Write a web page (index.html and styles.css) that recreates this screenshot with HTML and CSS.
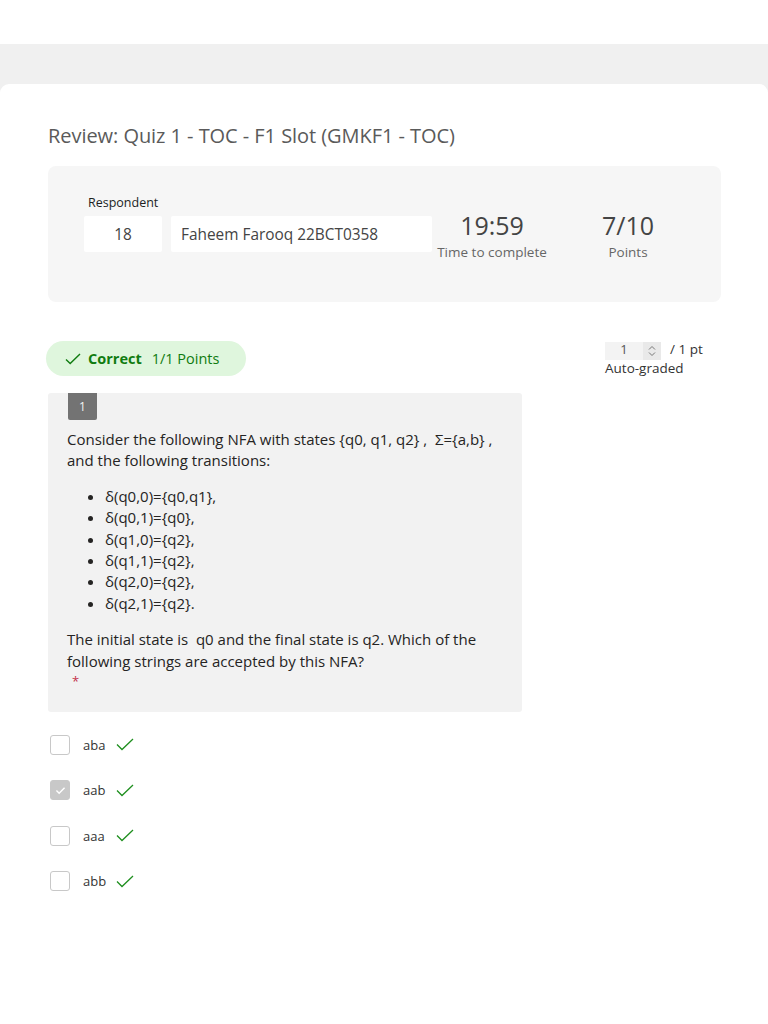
FILE: index.html
```html
<!DOCTYPE html>
<html lang="en">
<head>
<meta charset="utf-8">
<title>Review: Quiz 1 - TOC - F1 Slot (GMKF1 - TOC)</title>
<link rel="stylesheet" href="styles.css">
</head>
<body>
<div class="topbar"></div>
<div class="shell">
  <main class="card">
    <h1 class="title">Review: Quiz 1 - TOC - F1 Slot (GMKF1 - TOC)</h1>

    <section class="summary">
      <div class="respondent">
        <div class="resp-label">Respondent</div>
        <div class="resp-boxes">
          <div class="box box-num">18</div>
          <div class="box box-name">Faheem Farooq 22BCT0358</div>
        </div>
      </div>
      <div class="stat stat-time">
        <div class="stat-value">19:59</div>
        <div class="stat-label">Time to complete</div>
      </div>
      <div class="stat stat-points">
        <div class="stat-value">7/10</div>
        <div class="stat-label">Points</div>
      </div>
    </section>

    <section class="question">
      <div class="q-header">
        <div class="pill">
          <svg class="pill-check" viewBox="0 0 16 12" width="16" height="12"><path d="M1 6.5 L5.2 10.5 L15 1" fill="none" stroke="#107c10" stroke-width="1.4"/></svg>
          <span class="pill-strong">Correct</span>
          <span class="pill-pts">1/1 Points</span>
        </div>
        <div class="grade">
          <div class="grade-row">
            <div class="spin">
              <span class="spin-val">1</span>
              <span class="spin-btn">
                <svg viewBox="0 0 10 14" width="10" height="14"><path d="M2 5.5 L5 2.5 L8 5.5 M2 8.5 L5 11.5 L8 8.5" fill="none" stroke="#777" stroke-width="1"/></svg>
              </span>
            </div>
            <span class="grade-max">/ 1 pt</span>
          </div>
          <div class="grade-auto">Auto-graded</div>
        </div>
      </div>

      <div class="q-body">
        <div class="q-num">1</div>
        <p class="q-text">Consider the following NFA with states {q0, q1, q2} ,&nbsp; Σ={a,b} , and the following transitions:</p>
        <ul class="q-list">
          <li>δ(q0,0)={q0,q1},</li>
          <li>δ(q0,1)={q0},</li>
          <li>δ(q1,0)={q2},</li>
          <li>δ(q1,1)={q2},</li>
          <li>δ(q2,0)={q2},</li>
          <li>δ(q2,1)={q2}.</li>
        </ul>
        <p class="q-text">The initial state is &nbsp;q0 and the final state is q2. Which of the following strings are accepted by this NFA?</p>
        <div class="req">*</div>
      </div>

      <ul class="options">
        <li class="opt">
          <span class="cb"></span><span class="opt-label">aba</span>
          <svg class="ok" viewBox="0 0 18 13" width="18" height="13"><path d="M1 6.5 L6 11.5 L17 1" fill="none" stroke="#1f8f1f" stroke-width="1.3"/></svg>
        </li>
        <li class="opt">
          <span class="cb cb-on"><svg viewBox="0 0 12 10" width="11" height="9"><path d="M1.5 5 L4.5 8 L10.5 2" fill="none" stroke="#fff" stroke-width="1.6"/></svg></span><span class="opt-label">aab</span>
          <svg class="ok" viewBox="0 0 18 13" width="18" height="13"><path d="M1 6.5 L6 11.5 L17 1" fill="none" stroke="#1f8f1f" stroke-width="1.3"/></svg>
        </li>
        <li class="opt">
          <span class="cb"></span><span class="opt-label">aaa</span>
          <svg class="ok" viewBox="0 0 18 13" width="18" height="13"><path d="M1 6.5 L6 11.5 L17 1" fill="none" stroke="#1f8f1f" stroke-width="1.3"/></svg>
        </li>
        <li class="opt">
          <span class="cb"></span><span class="opt-label">abb</span>
          <svg class="ok" viewBox="0 0 18 13" width="18" height="13"><path d="M1 6.5 L6 11.5 L17 1" fill="none" stroke="#1f8f1f" stroke-width="1.3"/></svg>
        </li>
      </ul>
    </section>
  </main>
</div>
</body>
</html>
```

FILE: styles.css
```css
* { box-sizing: border-box; }
html, body { margin: 0; padding: 0; background: #fff; }
body {
  font-family: "Open Sans", "Noto Sans", sans-serif;
  color: #252423;
}
.topbar { height: 44px; background: #fff; }
.shell { background: #f0f0f0; padding-top: 40px; }
.card {
  background: #fff;
  border-radius: 9px 9px 0 0;
  padding: 39px 47px 100px 48px;
  min-height: 940px;
}
.title {
  margin: 0;
  font-size: 20px;
  font-weight: 400;
  line-height: 26px;
  color: #5a5a5a;
  letter-spacing: -0.05px;
}
.summary {
  margin-top: 17px;
  background: #f6f6f6;
  border-radius: 8px;
  height: 136px;
  padding: 28px 36px 0 36px;
  display: flex;
  align-items: flex-start;
}
.resp-label {
  font-size: 12.5px;
  line-height: 18px;
  padding-left: 4px;
  color: #201f1e;
}
.resp-boxes { display: flex; gap: 9px; margin-top: 4px; }
.box {
  background: #fff;
  height: 36px;
  border-radius: 2px;
  font-size: 15.4px;
  color: #444;
  display: flex;
  align-items: center;
}
.box-num { width: 78px; justify-content: center; }
.box-name { width: 261px; padding-left: 10px; }
.stat { text-align: center; margin-top: 16px; }
.stat-time { width: 118px; margin-left: 1px; }
.stat-points { width: 72px; margin-left: 41px; }
.stat-value {
  font-size: 25px;
  line-height: 30px;
  color: #444;
}
.stat-label {
  margin-top: 3px;
  font-size: 13.5px;
  line-height: 18px;
  color: #666;
}
.question { margin-top: 39px; }
.q-header { display: flex; justify-content: space-between; align-items: flex-start; }
.pill {
  margin-left: -2px;
  width: 200px;
  height: 35px;
  border-radius: 18px;
  background: #dff6dd;
  display: flex;
  align-items: center;
  padding-left: 19px;
  color: #107c10;
  font-size: 14.5px;
}
.pill-check { margin-right: 7px; }
.pill-strong { font-weight: 700; margin-right: 10px; }
.grade { width: 116px; }
.grade-row { display: flex; align-items: flex-start; gap: 9px; height: 18px; margin-top: 1px; }
.spin {
  width: 56px;
  height: 18px;
  background: #f3f3f3;
  display: flex;
  align-items: center;
}
.spin-val { flex: 1; text-align: center; font-size: 13px; color: #555; line-height: 15px; padding-bottom: 3px; }
.spin-btn {
  width: 18px;
  height: 18px;
  background: #e9e9e9;
  display: flex;
  align-items: center;
  justify-content: center;
}
.spin-btn svg { display: block; }
.grade-max { font-size: 13.5px; color: #333; line-height: 15px; }
.grade-auto { font-size: 13.5px; color: #333; line-height: 16px; }
.q-body {
  margin-top: 17px;
  width: 474px;
  background: #f2f2f2;
  border-radius: 3px;
  padding: 0 19px 22px 19px;
  font-size: 15px;
  line-height: 21.4px;
  color: #252423;
  min-height: 319px;
}
.q-num {
  width: 29px;
  height: 27px;
  margin-left: 1px;
  background: #737373;
  color: #f4f4f4;
  font-size: 12px;
  display: flex;
  align-items: center;
  justify-content: center;
  border-radius: 0 0 2px 2px;
}
.q-text { margin: 9px 0 0 0; }
.q-list { margin: 14px 0 15px 0; padding-left: 38px; }
.q-list li { padding-left: 0; }
.q-list + .q-text { margin-top: 0; }
.req { color: #c4314b; font-size: 13px; line-height: 18px; padding-left: 5px; }
.options { list-style: none; margin: 10px 0 0 0; padding: 0; }
.opt { display: flex; align-items: center; height: 45.5px; }
.cb {
  width: 20px;
  height: 20px;
  margin-left: 2px;
  border: 1px solid #c8c8c8;
  border-radius: 3px;
  background: #fff;
  display: flex;
  align-items: center;
  justify-content: center;
}
.cb-on { background: #c8c8c8; border-color: #c8c8c8; }
.cb svg { display: block; }
.opt-label { margin-left: 13px; font-size: 13px; color: #333; width: 33px; }
.ok { display: block; }
```
